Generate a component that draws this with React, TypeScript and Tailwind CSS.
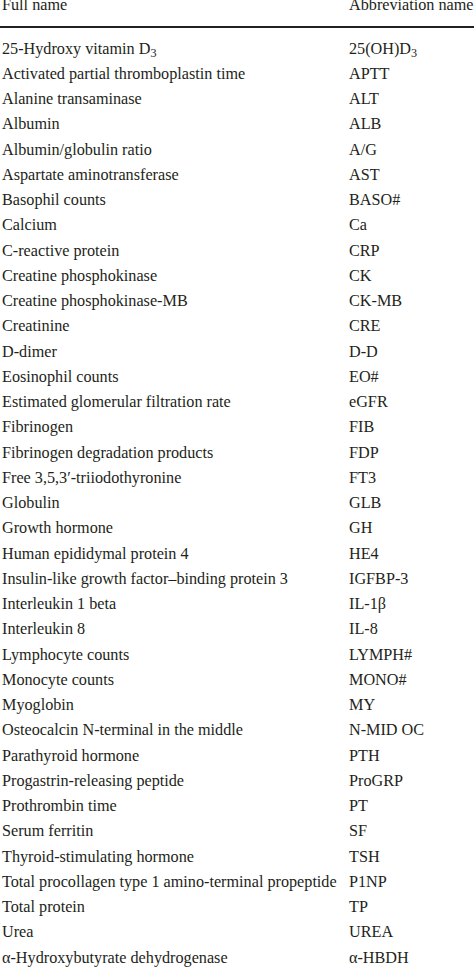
import React from "react";

const rows: [React.ReactNode, React.ReactNode][] = [
  [<>25-Hydroxy vitamin D<sub>3</sub></>, <>25(OH)D<sub>3</sub></>],
  ["Activated partial thromboplastin time", "APTT"],
  ["Alanine transaminase", "ALT"],
  ["Albumin", "ALB"],
  ["Albumin/globulin ratio", "A/G"],
  ["Aspartate aminotransferase", "AST"],
  ["Basophil counts", "BASO#"],
  ["Calcium", "Ca"],
  ["C-reactive protein", "CRP"],
  ["Creatine phosphokinase", "CK"],
  ["Creatine phosphokinase-MB", "CK-MB"],
  ["Creatinine", "CRE"],
  ["D-dimer", "D-D"],
  ["Eosinophil counts", "EO#"],
  ["Estimated glomerular filtration rate", "eGFR"],
  ["Fibrinogen", "FIB"],
  ["Fibrinogen degradation products", "FDP"],
  ["Free 3,5,3\u2032-triiodothyronine", "FT3"],
  ["Globulin", "GLB"],
  ["Growth hormone", "GH"],
  ["Human epididymal protein 4", "HE4"],
  ["Insulin-like growth factor\u2013binding protein 3", "IGFBP-3"],
  ["Interleukin 1 beta", "IL-1\u03b2"],
  ["Interleukin 8", "IL-8"],
  ["Lymphocyte counts", "LYMPH#"],
  ["Monocyte counts", "MONO#"],
  ["Myoglobin", "MY"],
  ["Osteocalcin N-terminal in the middle", "N-MID OC"],
  ["Parathyroid hormone", "PTH"],
  ["Progastrin-releasing peptide", "ProGRP"],
  ["Prothrombin time", "PT"],
  ["Serum ferritin", "SF"],
  ["Thyroid-stimulating hormone", "TSH"],
  ["Total procollagen type 1 amino-terminal propeptide", "P1NP"],
  ["Total protein", "TP"],
  ["Urea", "UREA"],
  ["\u03b1-Hydroxybutyrate dehydrogenase", "\u03b1-HBDH"],
];

export default function App() {
  return (
    <div
      className="w-[474px] h-[967px] overflow-hidden bg-white text-[#231f20] text-[16.2px] leading-[25.25px] whitespace-nowrap"
      style={{ fontFamily: '"Liberation Serif", "Times New Roman", serif' }}
    >
      <div className="-mt-[7px] flex pl-[2px]">
        <div className="w-[347px] shrink-0">Full name</div>
        <div className="shrink-0">Abbreviation name</div>
      </div>
      <div className="mt-[8px] h-[1.3px] bg-[#231f20]" />
      <div className="pt-[9px]">
        {rows.map(([a, b], i) => (
          <div key={i} className="flex pl-[2px]">
            <div className="w-[347px] shrink-0">{a}</div>
            <div className="shrink-0">{b}</div>
          </div>
        ))}
      </div>
    </div>
  );
}
